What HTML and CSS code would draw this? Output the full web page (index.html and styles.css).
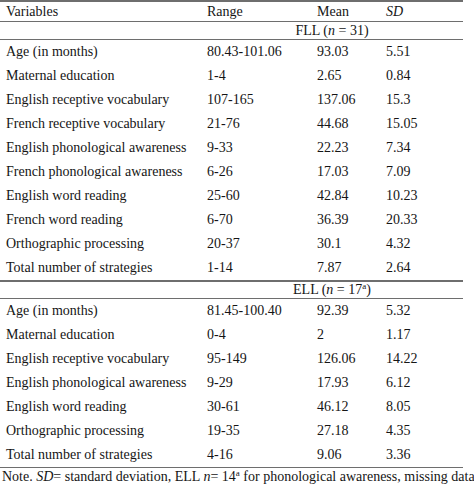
FILE: index.html
```html
<!DOCTYPE html>
<html>
<head>
<meta charset="utf-8">
<link rel="stylesheet" href="styles.css">
</head>
<body>
<table class="stats">
  <colgroup>
    <col class="c1"><col class="c2"><col class="c3"><col class="c4">
  </colgroup>
  <thead>
    <tr class="head"><th>Variables</th><th>Range</th><th>Mean</th><th><i>SD</i></th></tr>
  </thead>
  <tbody>
    <tr class="group"><td></td><td colspan="3" class="gt">FLL (<i>n</i> = 31)</td></tr>
    <tr><td>Age (in months)</td><td>80.43-101.06</td><td>93.03</td><td>5.51</td></tr>
    <tr><td>Maternal education</td><td>1-4</td><td>2.65</td><td>0.84</td></tr>
    <tr><td>English receptive vocabulary</td><td>107-165</td><td>137.06</td><td>15.3</td></tr>
    <tr><td>French receptive vocabulary</td><td>21-76</td><td>44.68</td><td>15.05</td></tr>
    <tr><td>English phonological awareness</td><td>9-33</td><td>22.23</td><td>7.34</td></tr>
    <tr><td>French phonological awareness</td><td>6-26</td><td>17.03</td><td>7.09</td></tr>
    <tr><td>English word reading</td><td>25-60</td><td>42.84</td><td>10.23</td></tr>
    <tr><td>French word reading</td><td>6-70</td><td>36.39</td><td>20.33</td></tr>
    <tr><td>Orthographic processing</td><td>20-37</td><td>30.1</td><td>4.32</td></tr>
    <tr class="last"><td>Total number of strategies</td><td>1-14</td><td>7.87</td><td>2.64</td></tr>
    <tr class="group ell"><td></td><td colspan="3" class="gt">ELL (<i>n</i> = 17<sup>a</sup>)</td></tr>
    <tr><td>Age (in months)</td><td>81.45-100.40</td><td>92.39</td><td>5.32</td></tr>
    <tr><td>Maternal education</td><td>0-4</td><td>2</td><td>1.17</td></tr>
    <tr><td>English receptive vocabulary</td><td>95-149</td><td>126.06</td><td>14.22</td></tr>
    <tr><td>English phonological awareness</td><td>9-29</td><td>17.93</td><td>6.12</td></tr>
    <tr><td>English word reading</td><td>30-61</td><td>46.12</td><td>8.05</td></tr>
    <tr><td>Orthographic processing</td><td>19-35</td><td>27.18</td><td>4.35</td></tr>
    <tr class="end"><td>Total number of strategies</td><td>4-16</td><td>9.06</td><td>3.36</td></tr>
  </tbody>
</table>
<p class="note">Note. <i>SD</i>= standard deviation, ELL <i>n</i>= 14<sup>a</sup> for phonological awareness, missing data</p>
</body>
</html>
```
FILE: styles.css
```css
html, body {
  margin: 0;
  padding: 0;
  background: #fff;
}
body {
  font-family: "Liberation Serif", "Times New Roman", serif;
  font-size: 14px;
  color: #151515;
  overflow: hidden;
  width: 474px;
}
.stats {
  border-collapse: collapse;
  table-layout: fixed;
  width: 463px;
  border-top: 2px solid #6e6e6e;
}
.c1 { width: 201px; }
.c2 { width: 110px; }
.c3 { width: 69px; }
.c4 { width: 83px; }
.stats th, .stats td {
  padding: 0 0 0 6px;
  text-align: left;
  font-weight: normal;
  white-space: nowrap;
  line-height: 16px;
}
.head th {
  height: 19px;
  border-bottom: 1px solid #6e6e6e;
}
.stats tbody tr td { height: 24px; }
.stats tbody tr.group td {
  height: 17px;
  border-bottom: 1px solid #6e6e6e;
}
.stats tbody tr.group.ell td { height: 15px; }
.stats td.gt {
  text-align: center;
  padding: 0;
}
.stats tr.last td { border-bottom: 2px solid #6e6e6e; }
.stats tr.end td { border-bottom: 1px solid #6e6e6e; }
sup {
  font-size: 9px;
  line-height: 0;
  vertical-align: 5px;
}
.note {
  margin: 0;
  padding-left: 2px;
  line-height: 16px;
  padding-top: 1px;
  white-space: nowrap;
}
```
